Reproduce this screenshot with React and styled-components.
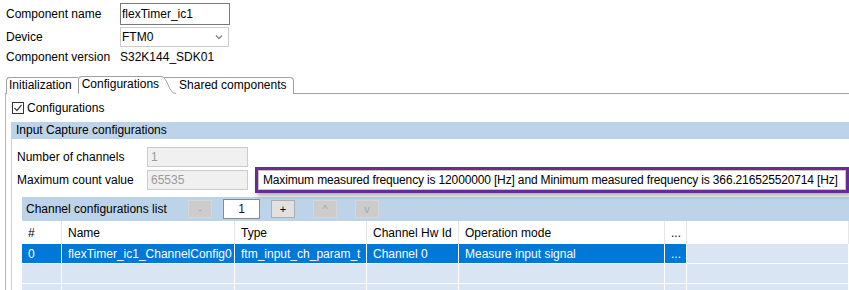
import React from "react";
import styled, { createGlobalStyle } from "styled-components";

const GlobalStyle = createGlobalStyle`
  body {
    margin: 0;
    background: #ffffff;
    font-family: "Liberation Sans", Arial, sans-serif;
    font-size: 12px;
    color: #000000;
    overflow: hidden;
  }
`;

const Page = styled.div`
  width: 849px;
  height: 290px;
  overflow: hidden;
`;

const TopForm = styled.div`
  display: grid;
  grid-template-columns: 114px auto;
  grid-template-rows: 22px 20px 16px;
  row-gap: 2px;
  align-items: center;
  padding: 3px 0 0 6px;
`;

const Label = styled.span`
  white-space: nowrap;
`;

const TextBox = styled.div`
  width: 107px;
  height: 20px;
  border: 1px solid #7a7a7a;
  display: flex;
  align-items: center;
  padding-left: 1px;
`;

const SelectBox = styled.div`
  width: 106px;
  height: 18px;
  border: 1px solid #cccccc;
  display: flex;
  align-items: center;
  justify-content: space-between;
  padding: 0 0 0 1px;
`;

const SelectArrow = styled.span`
  width: 18px;
  display: flex;
  justify-content: center;
`;

const Tabs = styled.div`
  display: flex;
  align-items: flex-end;
  margin: 11px 0 0 6px;
  height: 18px;
  position: relative;
  z-index: 1;
`;

const Tab = styled.div`
  position: relative;
  height: ${p => (p.$active ? 18 : 17)}px;
  box-sizing: border-box;
  border: 1px solid #a0a0a0;
  border-bottom: ${p => (p.$active ? "1px solid #ffffff" : "none")};
  border-right: ${p => (p.$last ? "1px solid #a0a0a0" : "none")};
  border-left: ${p => (p.$noLeft ? "none" : "1px solid #a0a0a0")};
  border-radius: ${p => (p.$last ? "0 4px 0 0" : "4px 0 0 0")};
  background: #ffffff;
  padding: ${p => p.$pad};
  line-height: 15px;
  white-space: nowrap;
`;

const Swoosh = styled.svg`
  position: absolute;
  top: -1px;
  right: -17px;
  z-index: 2;
`;

const Panel = styled.div`
  margin-left: 5px;
  border-left: 1px solid #b4b4b4;
  border-top: 1px solid #a0a0a0;
  margin-top: -1px;
  padding-top: 7px;
`;

const CheckRow = styled.div`
  display: flex;
  align-items: center;
  gap: 3px;
  padding-left: 6px;
  height: 13px;
`;

const Section = styled.div`
  margin: 8px 0 0 5px;
  border-left: 1px solid #cfcfcf;
  padding-bottom: 20px;
`;

const SectionHeader = styled.div`
  background: #bcd3ea;
  height: 17px;
  line-height: 17px;
  padding-left: 4px;
`;

const FieldRows = styled.div`
  padding: 8px 0 0 5px;
`;

const FieldRow = styled.div`
  display: flex;
  align-items: center;
  height: ${p => p.$h}px;
`;

const FieldLabel = styled.span`
  flex: 0 0 130px;
  white-space: nowrap;
`;

const DisabledInput = styled.div`
  flex: 0 0 auto;
  width: 96px;
  height: 18px;
  border: 1px solid #cccccc;
  background: #f0f0f0;
  color: #9a9a9a;
  display: flex;
  align-items: center;
  padding-left: 3px;
`;

const InfoBox = styled.div`
  flex: 1;
  min-width: 0;
  margin-left: 7px;
  height: 20px;
  border: 3px solid #6a2c8e;
  box-shadow: inset 0 0 0 1px #c4c4c4, 2px 3px 4px rgba(0, 0, 0, 0.3);
  display: flex;
  align-items: center;
  padding-left: 5px;
  white-space: nowrap;
  overflow: hidden;
  letter-spacing: -0.15px;
`;

const ChannelList = styled.div`
  margin: 4px 0 0 10px;
`;

const ListBar = styled.div`
  background: #bcd3ea;
  height: 24px;
  display: flex;
  align-items: center;
  padding-left: 4px;
`;

const ListTitle = styled.span`
  width: 162px;
  white-space: nowrap;
`;

const SmallButton = styled.div`
  width: 22px;
  height: 16px;
  border: 1px solid ${p => (p.$disabled ? "#d6d6d6" : "#adadad")};
  background: ${p => (p.$disabled ? "#cccccc" : "#e1e1e1")};
  color: ${p => (p.$disabled ? "#a8a8a8" : "#000000")};
  display: flex;
  align-items: center;
  justify-content: center;
  font-size: 11px;
  margin-left: ${p => p.$gap}px;
`;

const SpinInput = styled.div`
  width: 35px;
  height: 18px;
  border: 1px solid #8a8a8a;
  background: #ffffff;
  display: flex;
  align-items: center;
  justify-content: center;
  margin-left: 11px;
  color: #2a0a35;
`;

const Grid = styled.div`
  display: grid;
  grid-template-columns: 40px 173px 132px 92px 206px 22px 1fr;
`;

const HeadCell = styled.div`
  height: 23px;
  background: #ffffff;
  border-right: 1px solid #e6e6e6;
  padding-left: 6px;
  display: flex;
  align-items: center;
  white-space: nowrap;
  overflow: hidden;
  &:last-child {
    border-right: none;
  }
`;

const Cell = styled.div`
  height: 19px;
  background: ${p => (p.$selected ? "#0078d7" : "#d9e5f2")};
  color: ${p => (p.$selected ? "#ffffff" : "#000000")};
  border-right: 1px solid #ffffff;
  border-bottom: 1px solid #ffffff;
  padding-left: 6px;
  display: flex;
  align-items: center;
  white-space: nowrap;
  overflow: hidden;
`;

const columns = ["#", "Name", "Type", "Channel Hw Id", "Operation mode", "...", ""];
const rows = [
  ["0", "flexTimer_ic1_ChannelConfig0", "ftm_input_ch_param_t", "Channel 0", "Measure input signal", "..."],
  null,
  null,
];

const CheckBox = () => (
  <svg width="12" height="12" viewBox="0 0 12 12">
    <rect x="0.5" y="0.5" width="11" height="11" fill="#ffffff" stroke="#333333" />
    <path d="M2.5 6 L5 8.5 L9.5 3" fill="none" stroke="#444444" strokeWidth="1.2" />
  </svg>
);

const App = () => {
  return (
    <Page>
      <GlobalStyle />
      <TopForm>
        <Label>Component name</Label>
        <TextBox>flexTimer_ic1</TextBox>
        <Label>Device</Label>
        <SelectBox>
          FTM0
          <SelectArrow>
            <svg width="8" height="6" viewBox="0 0 8 6">
              <path d="M1 1.5 L4 4.5 L7 1.5" fill="none" stroke="#8a8a8a" strokeWidth="1.4" />
            </svg>
          </SelectArrow>
        </SelectBox>
        <Label>Component version</Label>
        <Label>S32K144_SDK01</Label>
      </TopForm>

      <Tabs>
        <Tab $pad="0 6px 0 2px">Initialization</Tab>
        <Tab $active $pad="0 0 0 3px">
          Configurations
          <Swoosh width="17" height="18" viewBox="0 0 17 18">
            <path d="M0 0 L2 0 C9 0 9 17 17 17 L17 18 L0 18 Z" fill="#ffffff" />
            <path d="M0 0.5 L2 0.5 C9 0.5 9 17.5 17 17.5" fill="none" stroke="#a0a0a0" />
          </Swoosh>
        </Tab>
        <Tab $last $noLeft $pad="0 6px 0 20px">Shared components</Tab>
      </Tabs>

      <Panel>
        <CheckRow>
          <CheckBox />
          Configurations
        </CheckRow>
        <Section>
          <SectionHeader>Input Capture configurations</SectionHeader>
          <FieldRows>
            <FieldRow $h={20}>
              <FieldLabel>Number of channels</FieldLabel>
              <DisabledInput>1</DisabledInput>
            </FieldRow>
            <FieldRow $h={26}>
              <FieldLabel>Maximum count value</FieldLabel>
              <DisabledInput>65535</DisabledInput>
              <InfoBox>
                Maximum measured frequency is 12000000 [Hz] and Minimum measured frequency is 366.216525520714 [Hz]
              </InfoBox>
            </FieldRow>
          </FieldRows>
          <ChannelList>
            <ListBar>
              <ListTitle>Channel configurations list</ListTitle>
              <SmallButton $disabled $gap={0}>-</SmallButton>
              <SpinInput>1</SpinInput>
              <SmallButton $gap={11}>+</SmallButton>
              <SmallButton $disabled $gap={18}>^</SmallButton>
              <SmallButton $disabled $gap={18}>v</SmallButton>
            </ListBar>
            <Grid>
              {columns.map((c, i) => (
                <HeadCell key={i}>{c}</HeadCell>
              ))}
              {rows.map((r, ri) =>
                columns.map((_, ci) => (
                  <Cell key={`${ri}-${ci}`} $selected={r && ci < 6}>
                    {r && ci < 6 ? r[ci] : ""}
                  </Cell>
                ))
              )}
            </Grid>
          </ChannelList>
        </Section>
      </Panel>
    </Page>
  );
};

export default App;
